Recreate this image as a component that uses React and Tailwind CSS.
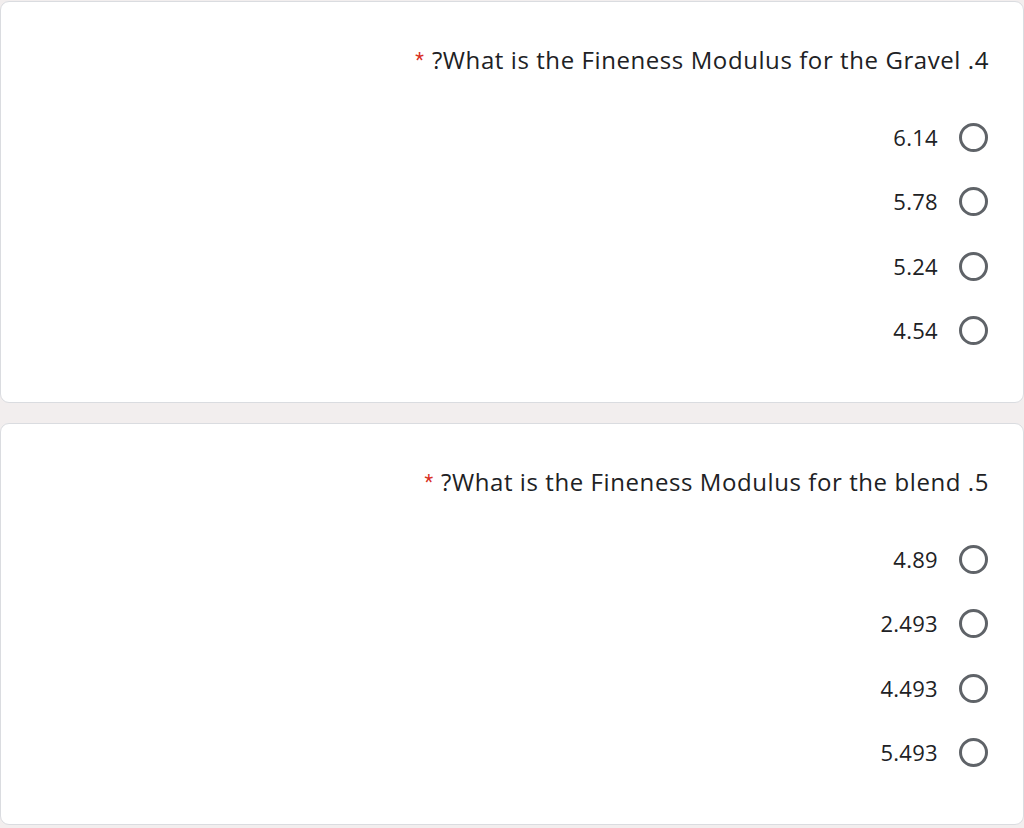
import React from 'react';

const questions = [
  { title: '?What is the Fineness Modulus for the Gravel .4', options: ['6.14', '5.78', '5.24', '4.54'] },
  { title: '?What is the Fineness Modulus for the blend .5', options: ['4.89', '2.493', '4.493', '5.493'] },
];

function Radio() {
  return <span className="block w-[29px] h-[29px] rounded-full border-[3px] border-[#5f6368] bg-white" />;
}

function QuestionCard({ title, options }) {
  return (
    <div className="bg-white border border-[#dadce0] rounded-[9px] h-[402px] pr-[34px] pt-[40px]">
      <div className="flex justify-end items-center h-[36px] text-[#202124] leading-none">
        <span className="text-[#d93025] mr-[8px] text-[20px]">*</span>
        <span className="text-[24px] tracking-[0.58px]" style={{ fontFamily: '"Open Sans", Roboto, sans-serif' }}>{title}</span>
      </div>
      <div className="mt-[45px] flex flex-col items-end gap-[35.3px]">
        {options.map((opt) => (
          <div key={opt} className="flex items-center h-[29px]">
            <span className="text-[22px] tracking-[0.3px] text-[#202124] mr-[21px]" style={{ fontFamily: '"Open Sans", Roboto, sans-serif' }}>{opt}</span>
            <span className="mr-[1px]"><Radio /></span>
          </div>
        ))}
      </div>
    </div>
  );
}

export default function App() {
  return (
    <div className="w-[1024px] h-[828px] bg-[#f2eeee] pt-[1px] flex flex-col gap-[20px] overflow-hidden" style={{ fontFamily: 'Roboto, "Noto Sans", sans-serif' }}>
      {questions.map((q) => (
        <QuestionCard key={q.title} {...q} />
      ))}
    </div>
  );
}
